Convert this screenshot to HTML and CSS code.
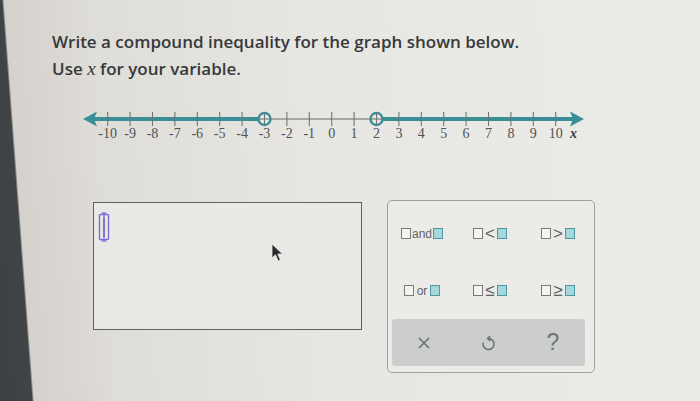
FILE: index.html
```html
<!DOCTYPE html>
<html>
<head>
<meta charset="utf-8">
<link rel="stylesheet" href="styles.css">
</head>
<body>
<div class="page">
  <div class="prompt">
    <p class="line">Write a compound inequality for the graph shown below.</p>
    <p class="line">Use <i class="var">x</i> for your variable.</p>
  </div>

  <svg class="numline" width="520" height="40" viewBox="0 0 520 40">
    <line x1="184.5" y1="14" x2="296.5" y2="14" stroke="#8e9493" stroke-width="1.4"/>
    <line x1="12" y1="14" x2="178.5" y2="14" stroke="#3a8e97" stroke-width="4"/>
    <line x1="302.5" y1="14" x2="494" y2="14" stroke="#3a8e97" stroke-width="4"/>
    <polygon points="3,14 17,6.5 14,14 17,21.5" fill="#3a8e97"/>
    <polygon points="504,14 490,6.5 493,14 490,21.5" fill="#3a8e97"/>
    <g stroke="#6f7776" stroke-width="1.1">
      <line x1="27.7" y1="7" x2="27.7" y2="21"/>
      <line x1="50.1" y1="7" x2="50.1" y2="21"/>
      <line x1="72.5" y1="7" x2="72.5" y2="21"/>
      <line x1="94.9" y1="7" x2="94.9" y2="21"/>
      <line x1="117.3" y1="7" x2="117.3" y2="21"/>
      <line x1="139.7" y1="7" x2="139.7" y2="21"/>
      <line x1="162.1" y1="7" x2="162.1" y2="21"/>
      <line x1="206.9" y1="7" x2="206.9" y2="21"/>
      <line x1="229.3" y1="7" x2="229.3" y2="21"/>
      <line x1="251.7" y1="7" x2="251.7" y2="21"/>
      <line x1="274.1" y1="7" x2="274.1" y2="21"/>
      <line x1="318.9" y1="7" x2="318.9" y2="21"/>
      <line x1="341.3" y1="7" x2="341.3" y2="21"/>
      <line x1="363.7" y1="7" x2="363.7" y2="21"/>
      <line x1="386.1" y1="7" x2="386.1" y2="21"/>
      <line x1="408.5" y1="7" x2="408.5" y2="21"/>
      <line x1="430.9" y1="7" x2="430.9" y2="21"/>
      <line x1="453.3" y1="7" x2="453.3" y2="21"/>
      <line x1="475.7" y1="7" x2="475.7" y2="21"/>
    </g>
    <g fill="#e9e8e4" stroke="#3a8e97" stroke-width="2.4">
      <circle cx="184.5" cy="14" r="6"/>
      <circle cx="296.5" cy="14" r="6"/>
    </g>
    <g stroke="#6f7776" stroke-width="1.1">
      <line x1="184.5" y1="8" x2="184.5" y2="20"/>
      <line x1="178.5" y1="14" x2="190.5" y2="14"/>
      <line x1="296.5" y1="8" x2="296.5" y2="20"/>
      <line x1="290.5" y1="14" x2="302.5" y2="14"/>
    </g>
    <g class="lbl" text-anchor="middle">
      <text x="27.7" y="33">-10</text>
      <text x="50.1" y="33">-9</text>
      <text x="72.5" y="33">-8</text>
      <text x="94.9" y="33">-7</text>
      <text x="117.3" y="33">-6</text>
      <text x="139.7" y="33">-5</text>
      <text x="162.1" y="33">-4</text>
      <text x="184.5" y="33">-3</text>
      <text x="206.9" y="33">-2</text>
      <text x="229.3" y="33">-1</text>
      <text x="251.7" y="33">0</text>
      <text x="274.1" y="33">1</text>
      <text x="296.5" y="33">2</text>
      <text x="318.9" y="33">3</text>
      <text x="341.3" y="33">4</text>
      <text x="363.7" y="33">5</text>
      <text x="386.1" y="33">6</text>
      <text x="408.5" y="33">7</text>
      <text x="430.9" y="33">8</text>
      <text x="453.3" y="33">9</text>
      <text x="475.7" y="33">10</text>
    </g>
    <text class="xlbl" x="490" y="33">x</text>
  </svg>

  <div class="work">
    <div class="answer">
      <svg class="caret" width="14" height="30" viewBox="0 0 14 30">
        <rect x="2.5" y="2.5" width="9" height="25" rx="1" fill="none" stroke="#7a6fe0" stroke-width="1.4"/>
        <line x1="7" y1="0.5" x2="7" y2="29.5" stroke="#7a6fe0" stroke-width="1.2"/>
        <line x1="4.5" y1="1" x2="9.5" y2="1" stroke="#7a6fe0" stroke-width="1.2"/>
        <line x1="4.5" y1="29" x2="9.5" y2="29" stroke="#7a6fe0" stroke-width="1.2"/>
        <line x1="7" y1="5" x2="7" y2="25" stroke="#55508a" stroke-width="1"/>
      </svg>
      <svg class="pointer" width="13" height="20" viewBox="0 0 13 20">
        <path d="M1 1 L1 15 L4.5 11.8 L7.2 18 L9.4 17 L6.8 11 L11.5 11 Z" fill="#2b2b2b" stroke="#e8e8e8" stroke-width="0.8"/>
      </svg>
    </div>

    <div class="pad">
      <div class="keys">
        <div class="key"><span class="sq"></span><span class="word">and</span><span class="sq teal"></span></div>
        <div class="key"><span class="sq"></span><span class="op">&lt;</span><span class="sq teal"></span></div>
        <div class="key"><span class="sq"></span><span class="op">&gt;</span><span class="sq teal"></span></div>
        <div class="key"><span class="sq"></span><span class="word sp">or</span><span class="sq teal"></span></div>
        <div class="key"><span class="sq"></span><span class="op">≤</span><span class="sq teal"></span></div>
        <div class="key"><span class="sq"></span><span class="op">≥</span><span class="sq teal"></span></div>
      </div>
      <div class="bar">
        <div class="tool">
          <svg width="14" height="14" viewBox="0 0 14 14">
            <path d="M2 2 L12 12 M12 2 L2 12" stroke="#6a6e6d" stroke-width="1.5" fill="none"/>
          </svg>
        </div>
        <div class="tool">
          <svg width="16" height="18" viewBox="0 0 16 18">
            <path d="M8.5 4.5 A5.5 5.5 0 1 1 3.2 8.6" stroke="#6a6e6d" stroke-width="1.5" fill="none"/>
            <path d="M10.2 2 L7.6 4.5 L10.2 7" stroke="#6a6e6d" stroke-width="1.5" fill="none"/>
          </svg>
        </div>
        <div class="tool"><span class="help">?</span></div>
      </div>
    </div>
  </div>
</div>
</body>
</html>
```

FILE: styles.css
```css
html, body {
  margin: 0;
  padding: 0;
}

body {
  width: 700px;
  height: 401px;
  overflow: hidden;
  background: linear-gradient(85.7deg, #3d4143 0, #404446 32px, #d5d1cc 34px, #dfddd8 120px, #e7e6e2 340px, #ebebe8 700px);
  font-family: "Open Sans", "Liberation Sans", sans-serif;
}

.page {
  display: flex;
  flex-direction: column;
  padding: 28px 0 0 52px;
}

.prompt {
  color: #37393b;
  font-size: 17px;
  font-weight: 600;
}

.line {
  margin: 0;
  line-height: 27px;
}

.var {
  font-family: "Liberation Serif", serif;
  font-size: 19px;
  font-weight: normal;
}

.numline {
  display: block;
  margin: 23px 0 0 28px;
}

.lbl text {
  font-family: "Liberation Serif", serif;
  font-size: 14px;
  fill: #4f5354;
}

.xlbl {
  font-family: "Liberation Serif", serif;
  font-size: 14px;
  font-style: italic;
  font-weight: bold;
  fill: #3a3d3e;
}

.work {
  display: flex;
  align-items: flex-start;
  gap: 25px;
  margin: 55px 0 0 41px;
}

.answer {
  position: relative;
  width: 264px;
  height: 117px;
  margin-top: 2px;
  border: 1.5px solid #5e6061;
  background: #eae9e5;
  padding: 9px 0 0 3px;
}

.caret {
  display: block;
}

.pointer {
  position: absolute;
  left: 177px;
  top: 40px;
}

.pad {
  width: 206px;
  height: 165px;
  border: 1px solid #9ea1a0;
  border-radius: 5px;
  background: #ecebe8;
  display: flex;
  flex-direction: column;
  padding-bottom: 6px;
}

.keys {
  display: grid;
  grid-template-columns: repeat(3, 68px);
  grid-template-rows: 57px 57px;
  padding-top: 4px;
}

.key {
  display: flex;
  align-items: center;
  justify-content: center;
  gap: 1px;
  color: #5e6261;
}

.sq {
  display: inline-block;
  width: 8px;
  height: 8.5px;
  border: 1.6px solid #777b7a;
  background: #f3f3f1;
}

.sq.teal {
  border-color: #4b9aa2;
  background: #a5d7db;
}

.word {
  font-family: "Liberation Sans", sans-serif;
  font-size: 12px;
  line-height: 12px;
}

.word.sp {
  margin: 0 2px;
}

.op {
  font-family: "Liberation Sans", sans-serif;
  font-size: 17px;
  line-height: 14px;
  margin: 0 1px;
}

.bar {
  display: grid;
  grid-template-columns: repeat(3, 1fr);
  margin: 0 9px 0 4px;
  height: 47px;
  background: #cbcecc;
  border-radius: 3px;
}

.tool {
  display: flex;
  align-items: center;
  justify-content: center;
}

.help {
  font-family: "Liberation Sans", sans-serif;
  font-size: 23px;
  color: #6e7271;
}
```
